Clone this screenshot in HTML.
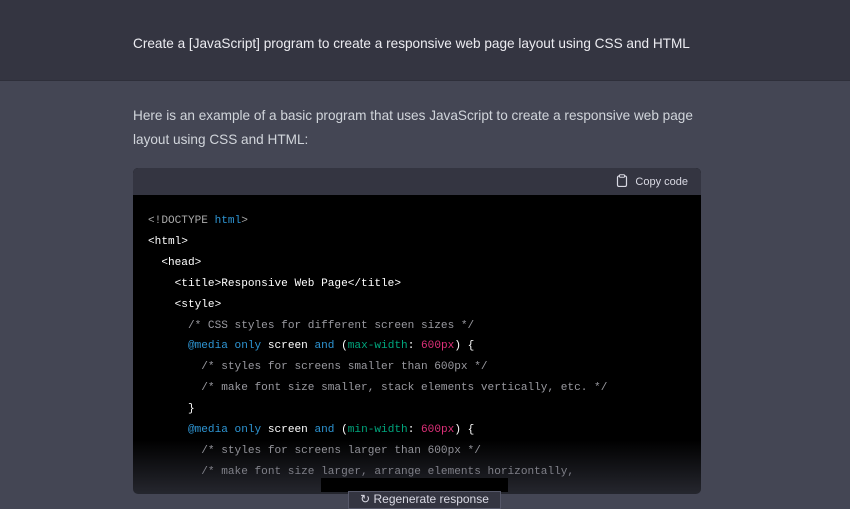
<!DOCTYPE html><html><head><style>
body{margin:0;width:850px;height:505px;overflow:hidden;background:#444654;font-family:"Liberation Sans",sans-serif;position:relative}
.top{position:absolute;left:0;top:0;width:850px;height:80px;background:#343541;border-bottom:1px solid #2e2f3a}
.q{position:absolute;left:133px;top:36px;color:#ececf1;font-size:13.6px}
.p{position:absolute;left:133px;top:104px;width:575px;color:#d1d5db;font-size:13.6px;line-height:23.5px}
.box{position:absolute;left:133px;top:168px;width:568px;height:326px;border-radius:5px;overflow:hidden;background:#000}
.hd{height:27px;background:#343541;color:#d9d9e3;font-size:11px;text-align:right;line-height:28px;padding-right:13px}
pre{margin:0;padding:16px 15px;font-family:"Liberation Mono",monospace;font-size:11.1px;line-height:20.9px;color:#fff}
.c{color:#9a9aa0}.b{color:#2e95d3}.g{color:#00a67d}.r{color:#df3079}.d{color:#aaa}
.fade{position:absolute;left:133px;top:440px;width:568px;height:54px;background:linear-gradient(rgba(68,70,84,0),rgba(68,70,84,.55))}
.blk{position:absolute;left:321px;top:478px;width:187px;height:14px;background:#000}
.btn{position:absolute;left:348px;top:491px;width:151px;height:16px;background:#343541;border:1px solid #565869;color:#d9d9e3;font-size:12px;line-height:14px;text-align:center}
</style></head><body>
<div class="top"></div>
<div class="q">Create a [JavaScript] program to create a responsive web page layout using CSS and HTML</div>
<div class="p">Here is an example of a basic program that uses JavaScript to create a responsive web page layout using CSS and HTML:</div>
<div class="box"><div class="hd"><svg width="12" height="13" viewBox="0 0 12 13" style="vertical-align:-2px;margin-right:7px"><rect x="1.5" y="2" width="9" height="10.5" rx="1.5" fill="none" stroke="#d9d9e3" stroke-width="1.2"/><rect x="3.5" y=".8" width="5" height="2.4" rx=".6" fill="#343541" stroke="#d9d9e3" stroke-width="1"/></svg>Copy code</div>
<pre><span class="d">&lt;!DOCTYPE</span> <span class="b">html</span><span class="d">&gt;</span>
&lt;html&gt;
  &lt;head&gt;
    &lt;title&gt;Responsive Web Page&lt;/title&gt;
    &lt;style&gt;
      <span class="c">/* CSS styles for different screen sizes */</span>
      <span class="b">@media only</span> screen <span class="b">and</span> (<span class="g">max-width</span>: <span class="r">600px</span>) {
        <span class="c">/* styles for screens smaller than 600px */</span>
        <span class="c">/* make font size smaller, stack elements vertically, etc. */</span>
      }
      <span class="b">@media only</span> screen <span class="b">and</span> (<span class="g">min-width</span>: <span class="r">600px</span>) {
        <span class="c">/* styles for screens larger than 600px */</span>
        <span class="c">/* make font size larger, arrange elements horizontally,</span></pre></div>
<div class="fade"></div>
<div class="blk"></div>
<div class="btn">↻ Regenerate response</div>
</body></html>
